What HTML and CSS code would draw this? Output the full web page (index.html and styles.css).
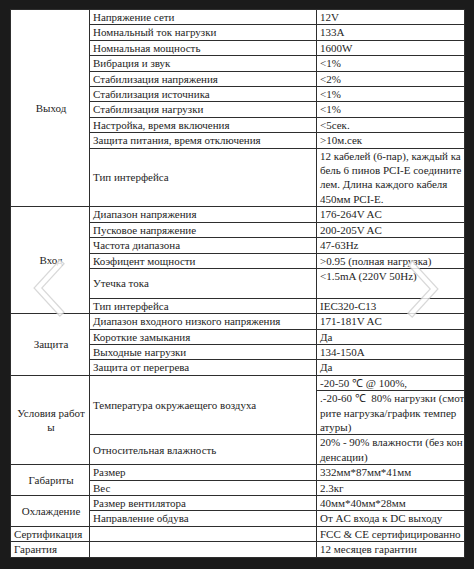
FILE: index.html
```html
<!DOCTYPE html>
<html lang="ru">
<head>
<meta charset="utf-8">
<title>Характеристики</title>
<link rel="stylesheet" href="styles.css">
</head>
<body>
<div class="frame">
  <table class="spec">
    <colgroup><col class="c1"><col class="c2"><col class="c3"></colgroup>
    <tr><td rowspan="10" class="grp">Выход</td><td>Напряжение сети</td><td>12V</td></tr>
    <tr><td>Номнальный ток нагрузки</td><td>133A</td></tr>
    <tr><td>Номнальная мощность</td><td>1600W</td></tr>
    <tr><td>Вибрация и звук</td><td>&lt;1%</td></tr>
    <tr><td>Стабилизация напряжения</td><td>&lt;2%</td></tr>
    <tr><td>Стабилизация источника</td><td>&lt;1%</td></tr>
    <tr><td>Стабилизация нагрузки</td><td>&lt;1%</td></tr>
    <tr><td>Настройка, время включения</td><td>&lt;5сек.</td></tr>
    <tr><td>Защита питания, время отключения</td><td>&gt;10м.сек</td></tr>
    <tr><td>Тип интерфейса</td><td>12 кабелей (6-пар), каждый ка<br>бель 6 пинов PCI-E соедините<br>лем. Длина каждого кабеля<br>450мм PCI-E.</td></tr>

    <tr><td rowspan="6" class="grp">Вход</td><td>Диапазон напряжения</td><td>176-264V AC</td></tr>
    <tr><td>Пусковое напряжение</td><td>200-205V AC</td></tr>
    <tr><td>Частота диапазона</td><td>47-63Hz</td></tr>
    <tr><td>Коэфицент мощности</td><td>&gt;0.95 (полная нагрузка)</td></tr>
    <tr><td>Утечка тока</td><td class="top">&lt;1.5mA (220V 50Hz)<br>&nbsp;</td></tr>
    <tr><td>Тип интерфейса</td><td>IEC320-C13</td></tr>

    <tr><td rowspan="4" class="grp">Защита</td><td>Диапазон входного низкого напряжения</td><td>171-181V AC</td></tr>
    <tr><td>Короткие замыкания</td><td>Да</td></tr>
    <tr><td>Выходные нагрузки</td><td>134-150A</td></tr>
    <tr><td>Защита от перегрева</td><td>Да</td></tr>

    <tr><td rowspan="3" class="grp">Условия работ<br>ы</td><td rowspan="2">Температура окружаещего воздуха</td><td>-20-50 ℃ @ 100%,</td></tr>
    <tr><td>.-20-60 ℃&nbsp; 80% нагрузки (смот<br>рите нагрузка/график темпер<br>атуры)</td></tr>
    <tr><td>Относительная влажность</td><td>20% - 90% влажности (без кон<br>денсации)</td></tr>

    <tr><td rowspan="2" class="grp">Габариты</td><td>Размер</td><td>332мм*87мм*41мм</td></tr>
    <tr><td>Вес</td><td>2.3кг</td></tr>

    <tr><td rowspan="2" class="grp">Охлаждение</td><td>Размер вентилятора</td><td>40мм*40мм*28мм</td></tr>
    <tr><td>Направление обдува</td><td>От AC входа к DC выходу</td></tr>

    <tr><td>Сертификация</td><td></td><td>FCC &amp; CE сертифицированно</td></tr>
    <tr><td>Гарантия</td><td></td><td>12 месяцев гарантии</td></tr>
  </table>

  <svg class="arrow arrow-left" width="34" height="60" viewBox="0 0 34 60" aria-hidden="true">
    <polyline points="27,6 5,30 27,54" fill="none" stroke="#cfcfcf" stroke-width="7" stroke-linejoin="miter" stroke-linecap="square"/>
    <polyline points="27,6 5,30 27,54" fill="none" stroke="#ffffff" stroke-width="4.5" stroke-linejoin="miter" stroke-linecap="square"/>
  </svg>
  <svg class="arrow arrow-right" width="34" height="60" viewBox="0 0 34 60" aria-hidden="true">
    <polyline points="7,6 29,30 7,54" fill="none" stroke="#cfcfcf" stroke-width="7" stroke-linejoin="miter" stroke-linecap="square"/>
    <polyline points="7,6 29,30 7,54" fill="none" stroke="#ffffff" stroke-width="4.5" stroke-linejoin="miter" stroke-linecap="square"/>
  </svg>
</div>
</body>
</html>
```

FILE: styles.css
```css
html, body {
  margin: 0;
  padding: 0;
  background: #1b1b1b;
}

.frame {
  position: relative;
  width: 474px;
  height: 569px;
  padding: 9px 0 0 10px;
  box-sizing: border-box;
}

.spec {
  border-collapse: collapse;
  table-layout: fixed;
  width: 454px;
  background: #ffffff;
  font-family: "Liberation Serif", "Times New Roman", serif;
  font-size: 11px;
  line-height: 14.4px;
  color: #1e1e1e;
}

.c1 { width: 79px; }
.c2 { width: 227px; }
.c3 { width: 148px; }

.spec td {
  border: 1px solid #2e2e2e;
  padding: 0 1px 0 3px;
  vertical-align: middle;
  white-space: nowrap;
  overflow: hidden;
}

.spec td.grp {
  text-align: center;
}

.spec td.top {
  vertical-align: top;
}

.arrow {
  position: absolute;
  opacity: 0.8;
}

.arrow-left {
  left: 33px;
  top: 258px;
}

.arrow-right {
  left: 405px;
  top: 259px;
}
```
